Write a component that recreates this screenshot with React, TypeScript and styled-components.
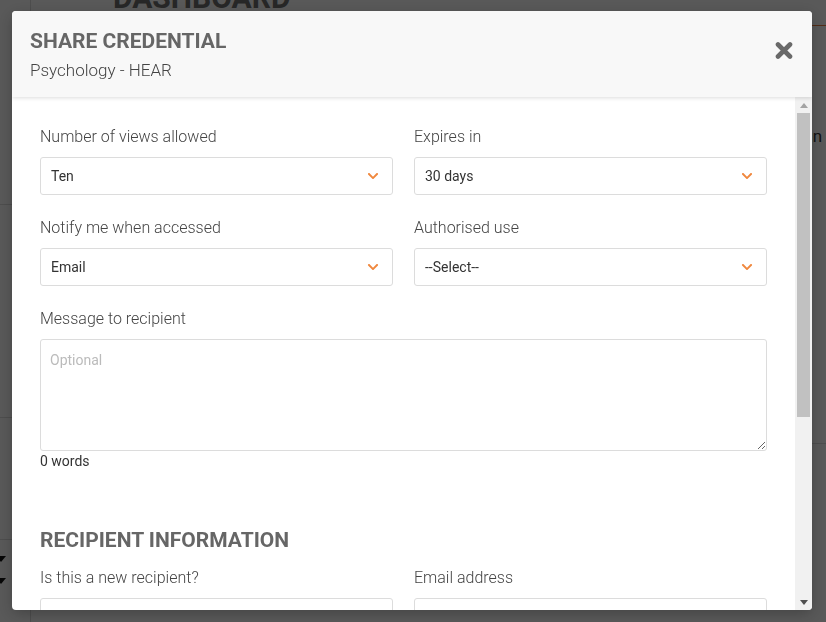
import styled, { createGlobalStyle } from "styled-components";
import { FaChevronDown } from "react-icons/fa";

const GlobalStyle = createGlobalStyle`
  html, body {
    margin: 0;
    padding: 0;
    height: 100%;
    overflow: hidden;
  }
  body {
    font-family: Roboto, "Liberation Sans", sans-serif;
    background: #f2f2f2;
  }
  * {
    box-sizing: border-box;
  }
`;

/* page behind the dialog */

const Page = styled.div`
  display: grid;
  grid-template-columns: 31px 1fr;
  height: 100vh;
  background: #f2f2f2;
`;

const Sidebar = styled.div`
  display: flex;
  flex-direction: column;
  border-right: 1px solid #d2d2d2;
`;

const SideBlock = styled.div<{ h: number }>`
  height: ${(p) => p.h}px;
  border-bottom: 1px solid #d2d2d2;
`;

const Caret = styled.div`
  margin: 16px 0 0 -4px;
  width: 0;
  height: 0;
  border-left: 5px solid transparent;
  border-right: 5px solid transparent;
  border-top: 6px solid #111;
`;

const Main = styled.div`
  display: flex;
  flex-direction: column;
`;

const TopBar = styled.div`
  height: 26px;
  display: flex;
  align-items: flex-end;
  border-bottom: 1px solid #e07a3f;
  padding-left: 82px;
  overflow: hidden;
`;

const PageTitle = styled.h1`
  margin: 0 0 12px;
  font-size: 30px;
  line-height: 30px;
  font-weight: 700;
  color: #6a6a6a;
`;

const MainBody = styled.div`
  display: flex;
  justify-content: flex-end;
  height: 418px;
  border-bottom: 1px solid #d2d2d2;
`;

const SideLink = styled.div`
  width: 37px;
  margin-top: 100px;
  white-space: nowrap;
  overflow: hidden;
  font-size: 17px;
  color: #333;
`;

const Overlay = styled.div`
  position: fixed;
  inset: 0;
  background: rgba(0, 0, 0, 0.632);
`;

/* dialog */

const Modal = styled.div`
  position: fixed;
  left: 12px;
  top: 11px;
  width: 800px;
  height: 599px;
  display: flex;
  flex-direction: column;
  background: #fff;
  border-radius: 4px;
  overflow: hidden;
  box-shadow: 0 4px 16px rgba(0, 0, 0, 0.25);
`;

const Header = styled.div`
  position: relative;
  z-index: 1;
  flex: 0 0 86px;
  display: flex;
  justify-content: space-between;
  align-items: flex-start;
  padding: 18px 19px 0 18px;
  background: #f8f8f8;
  box-shadow: 0 1px 4px rgba(0, 0, 0, 0.14);
`;

const Title = styled.h2`
  margin: 0;
  font-size: 21px;
  line-height: 24px;
  font-weight: 700;
  color: #666;
`;

const Subtitle = styled.div`
  margin-top: 5px;
  font-size: 17px;
  line-height: 24px;
  font-weight: 300;
  color: #444;
`;

const CloseButton = styled.button`
  margin-top: 13px;
  padding: 0;
  border: 0;
  background: none;
  display: flex;
  cursor: pointer;
`;

const BodyRow = styled.div`
  flex: 1;
  min-height: 0;
  display: flex;
`;

const Body = styled.div`
  flex: 1;
  overflow: hidden;
  padding: 29px 28px 32px;
`;

const ScrollTrack = styled.div`
  flex: 0 0 17px;
  display: flex;
  flex-direction: column;
  background: #f1f1f1;
`;

const ScrollArrow = styled.div<{ down?: boolean }>`
  height: 16px;
  display: flex;
  align-items: center;
  justify-content: center;

  &::before {
    content: "";
    width: 0;
    height: 0;
    border-left: 4px solid transparent;
    border-right: 4px solid transparent;
    ${(p) =>
      p.down ? "border-top: 5px solid #505050;" : "border-bottom: 5px solid #a3a3a3;"}
  }
`;

const ScrollThumb = styled.div`
  height: 304px;
  margin: 0 2px;
  background: #c1c1c1;
`;

const ScrollSpacer = styled.div`
  flex: 1;
`;

const FieldGrid = styled.div`
  display: grid;
  grid-template-columns: 1fr 1fr;
  column-gap: 21px;
  row-gap: 22px;
`;

const Field = styled.div<{ wide?: boolean }>`
  display: flex;
  flex-direction: column;
  grid-column: ${(p) => (p.wide ? "1 / -1" : "auto")};
`;

const Label = styled.label`
  font-size: 16px;
  line-height: 22px;
  font-weight: 300;
  color: #444;
  margin-bottom: 9px;
`;

const SelectWrap = styled.div`
  position: relative;
`;

const Select = styled.select`
  width: 100%;
  height: 38px;
  padding: 0 32px 0 10px;
  border: 1px solid #dcdcdc;
  border-radius: 3px;
  background: #fff;
  appearance: none;
  font-family: Roboto, "Liberation Sans", sans-serif;
  font-size: 14px;
  color: #333;
  outline: none;
`;

const Chevron = styled.span`
  position: absolute;
  right: 14px;
  top: 50%;
  transform: translateY(-50%);
  display: flex;
  color: #f0883e;
  pointer-events: none;
`;

const Input = styled.input`
  width: 100%;
  height: 38px;
  padding: 0 10px;
  border: 1px solid #dcdcdc;
  border-radius: 3px;
  font-family: Roboto, "Liberation Sans", sans-serif;
  font-size: 14px;
  color: #333;
`;

const TextArea = styled.textarea`
  width: 100%;
  height: 112px;
  padding: 10px 9px;
  border: 1px solid #dcdcdc;
  border-radius: 3px;
  font-family: Roboto, "Liberation Sans", sans-serif;
  font-size: 14px;
  line-height: 20px;
  color: #333;
  outline: none;

  &::placeholder {
    color: #bbb;
  }
`;

const WordCount = styled.div`
  font-size: 14px;
  line-height: 20px;
  color: #333;
`;

const SectionTitle = styled.h3`
  margin: 57px 0 15px;
  font-size: 21px;
  line-height: 24px;
  font-weight: 700;
  color: #666;
`;

const Actions = styled.div`
  display: flex;
  justify-content: flex-end;
  gap: 12px;
  margin-top: 32px;
`;

const Button = styled.button<{ primary?: boolean }>`
  height: 40px;
  padding: 0 22px;
  border-radius: 3px;
  border: 1px solid ${(p) => (p.primary ? "#f0883e" : "#ccc")};
  background: ${(p) => (p.primary ? "#f0883e" : "#fff")};
  color: ${(p) => (p.primary ? "#fff" : "#555")};
  font-family: Roboto, "Liberation Sans", sans-serif;
  font-size: 14px;
  font-weight: 700;
`;

function CloseIcon() {
  return (
    <svg width="18" height="17" viewBox="0 0 18 17">
      <path d="M3 2.5 L15 14.5 M15 2.5 L3 14.5" stroke="#696969" strokeWidth="4.6" strokeLinecap="round" fill="none" />
    </svg>
  );
}

function SelectField({ label, value, options }: { label: string; value: string; options: string[] }) {
  return (
    <Field>
      <Label>{label}</Label>
      <SelectWrap>
        <Select defaultValue={value}>
          {options.map((o) => (
            <option key={o}>{o}</option>
          ))}
        </Select>
        <Chevron>
          <FaChevronDown size={12} />
        </Chevron>
      </SelectWrap>
    </Field>
  );
}

export default function App() {
  return (
    <>
      <GlobalStyle />
      <Page>
        <Sidebar>
          <SideBlock h={205} />
          <SideBlock h={213} />
          <SideBlock h={122} />
          <Caret />
          <Caret />
        </Sidebar>
        <Main>
          <TopBar>
            <PageTitle>DASHBOARD</PageTitle>
          </TopBar>
          <MainBody>
            <SideLink>Sign In</SideLink>
          </MainBody>
        </Main>
      </Page>
      <Overlay />
      <Modal>
        <Header>
          <div>
            <Title>SHARE CREDENTIAL</Title>
            <Subtitle>Psychology - HEAR</Subtitle>
          </div>
          <CloseButton aria-label="Close">
            <CloseIcon />
          </CloseButton>
        </Header>
        <BodyRow>
          <Body>
            <FieldGrid>
              <SelectField label="Number of views allowed" value="Ten" options={["One", "Five", "Ten", "Unlimited"]} />
              <SelectField label="Expires in" value="30 days" options={["7 days", "14 days", "30 days", "90 days"]} />
              <SelectField label="Notify me when accessed" value="Email" options={["Email", "Never"]} />
              <SelectField label="Authorised use" value="--Select--" options={["--Select--", "Employment", "Further study"]} />
              <Field wide>
                <Label>Message to recipient</Label>
                <TextArea placeholder="Optional" />
                <WordCount>0 words</WordCount>
              </Field>
            </FieldGrid>
            <SectionTitle>RECIPIENT INFORMATION</SectionTitle>
            <FieldGrid>
              <SelectField label="Is this a new recipient?" value="Yes" options={["Yes", "No"]} />
              <Field>
                <Label>Email address</Label>
                <Input />
              </Field>
              <Field>
                <Label>First name</Label>
                <Input />
              </Field>
              <Field>
                <Label>Last name</Label>
                <Input />
              </Field>
            </FieldGrid>
            <Actions>
              <Button>Cancel</Button>
              <Button primary>Share</Button>
            </Actions>
          </Body>
          <ScrollTrack>
            <ScrollArrow />
            <ScrollThumb />
            <ScrollSpacer />
            <ScrollArrow down />
          </ScrollTrack>
        </BodyRow>
      </Modal>
    </>
  );
}
